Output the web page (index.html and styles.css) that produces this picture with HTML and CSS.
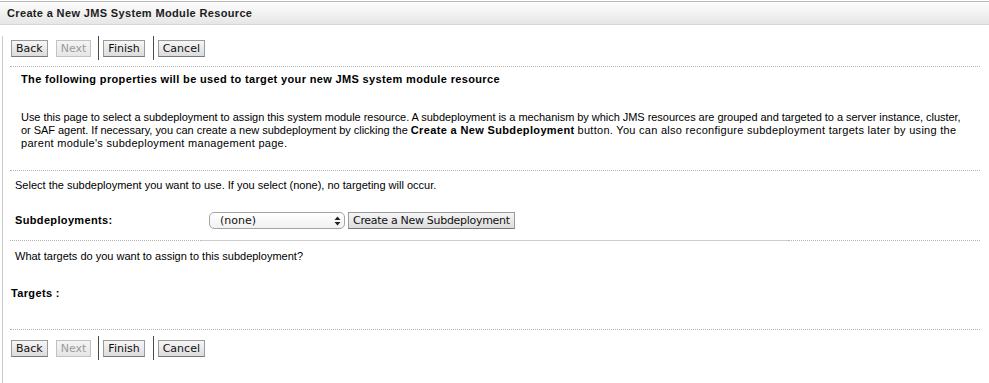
FILE: index.html
```html
<!DOCTYPE html>
<html lang="en">
<head>
    <meta charset="UTF-8">
    <title>Create a New JMS System Module Resource</title>
    <link rel="stylesheet" href="styles.css">
</head>
<body>
    <!-- Title bar -->
    <div class="title-bar">Create a New JMS System Module Resource</div>

    <div class="content">
        <!-- Top buttons -->
        <div class="toolbar">
            <button class="btn">Back</button>
            <button class="btn" disabled>Next</button>
            <span class="bar-sep"></span>
            <button class="btn">Finish</button>
            <span class="bar-sep"></span>
            <button class="btn">Cancel</button>
        </div>

        <div class="main">
            <!-- Intro -->
            <div class="intro">
                <p class="intro-title">The following properties will be used to target your new JMS system module resource</p>
                <p class="intro-text">Use this page to select a subdeployment to assign this system module resource. A subdeployment is a mechanism by which JMS resources are grouped and targeted to a server instance, cluster, or SAF agent. If necessary, you can create a new subdeployment by clicking the <b>Create a New Subdeployment</b> <span class="intro-tail">button. You can also reconfigure subdeployment targets later by using the parent module's subdeployment management page.</span></p>
            </div>

            <p class="hint">Select the subdeployment you want to use. If you select (none), no targeting will occur.</p>

            <div class="field-row">
                <div class="field-label">Subdeployments:</div>
                <div class="field-value">
                    <span class="select-wrap">
                        <select class="select">
                            <option>(none)</option>
                        </select>
                        <svg class="select-arrows" width="7" height="10" viewBox="0 0 7 10">
                            <path d="M0.5 4 L3.5 0.5 L6.5 4 Z" fill="#222"/>
                            <path d="M0.5 6 L3.5 9.5 L6.5 6 Z" fill="#222"/>
                        </svg>
                    </span>
                    <button class="btn btn-create">Create a New Subdeployment</button>
                </div>
                <div class="field-fill"></div>
            </div>

            <p class="hint targets-hint">What targets do you want to assign to this subdeployment?</p>

            <p class="targets-label">Targets :</p>
        </div>

        <!-- Bottom buttons -->
        <div class="toolbar toolbar-bottom">
            <button class="btn">Back</button>
            <button class="btn" disabled>Next</button>
            <span class="bar-sep"></span>
            <button class="btn">Finish</button>
            <span class="bar-sep"></span>
            <button class="btn">Cancel</button>
        </div>
    </div>
</body>
</html>
```

FILE: styles.css
```css
/* Global */
body {
    margin: 0;
    font-family: "Liberation Sans", Arial, sans-serif;
    font-size: 11px;
    line-height: 13px;
    color: #000;
    background: #fff;
}

p {
    margin: 0;
}

b {
    letter-spacing: 0.35px;
}

/* Title bar */
.title-bar {
    margin-top: 1px;
    height: 22px;
    line-height: 22px;
    padding-left: 7px;
    border-top: 1px solid #b9b9b9;
    border-bottom: 1px solid #d6d6d6;
    background: linear-gradient(#fdfdfd, #e6e6e6);
    font-weight: bold;
    letter-spacing: 0.35px;
    color: #1c1c1c;
}

/* Content frame */
.content {
    margin-left: 2px;
    border-left: 1px solid #c9c9c9;
    min-height: 358px;
}

/* Button bar */
.toolbar {
    display: flex;
    align-items: center;
    height: 24px;
    margin: 11px 9px 0 7px;
    padding: 0 0 6px 1px;
    border-bottom: 1px dotted #b4b4b4;
}

.toolbar-bottom {
    margin-top: 6px;
    border-bottom: none;
}

.btn {
    box-sizing: border-box;
    height: 17px;
    padding: 0 4px;
    margin-right: 8px;
    font-family: "DejaVu Sans", sans-serif;
    font-size: 11px;
    color: #111;
    border: 1px solid #9a9a9a;
    border-bottom-color: #777;
    border-radius: 0;
    background: linear-gradient(#f6f6f6, #dcdcdc);
}

.btn:disabled {
    color: #9a9a9a;
    border-color: #c2c2c2;
    background: linear-gradient(#f4f4f4, #e6e6e6);
    margin-right: 7px;
}

.bar-sep {
    width: 1px;
    height: 24px;
    background: #4a4a4a;
    margin-right: 4px;
}

/* Main area */
.main {
    margin: 0 9px 0 7px;
}

.intro {
    padding: 6px 8px 20px 11px;
    border-bottom: 1px dotted #b4b4b4;
}

.intro-title {
    font-weight: bold;
    letter-spacing: 0.35px;
}

.intro-text {
    margin-top: 25px;
    letter-spacing: -0.04px;
}

.intro-tail {
    letter-spacing: 0.28px;
}

.hint {
    padding: 8px 0 0 5px;
}

/* Subdeployments row */
.field-row {
    display: flex;
    margin-top: 17px;
}

.field-label {
    width: 186px;
    padding: 5px 0 0 5px;
    font-weight: bold;
    letter-spacing: 0.35px;
    border-bottom: 1px dotted #b4b4b4;
}

.field-value {
    display: flex;
    align-items: center;
    width: 579px;
    padding: 3px 0 11px 8px;
    border-bottom: 1px solid #cdcdcd;
}

.field-fill {
    flex: 1;
    border-bottom: 1px dotted #b4b4b4;
}

.select-wrap {
    position: relative;
    display: inline-block;
    margin-right: 3px;
}

.select {
    appearance: none;
    -webkit-appearance: none;
    box-sizing: border-box;
    display: block;
    width: 136px;
    height: 17px;
    padding: 0 0 0 10px;
    font-family: "DejaVu Sans", sans-serif;
    font-size: 11px;
    color: #111;
    border: 1px solid #a4a4a4;
    border-radius: 5px;
    background: linear-gradient(#ffffff, #f1f1f1);
}

.select-arrows {
    position: absolute;
    right: 4px;
    top: 4px;
}

.field-value .btn-create {
    margin-right: 0;
    letter-spacing: -0.3px;
}

.targets-hint {
    padding-top: 9px;
}

.targets-label {
    padding: 24px 0 29px 1px;
    font-weight: bold;
    letter-spacing: 0.35px;
    border-bottom: 1px dotted #b4b4b4;
}
```
